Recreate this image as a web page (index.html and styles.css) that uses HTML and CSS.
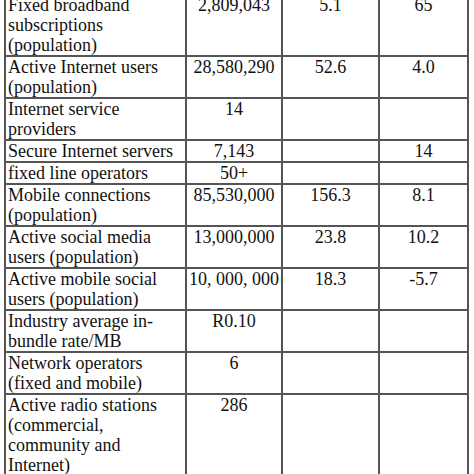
FILE: index.html
```html
<!DOCTYPE html>
<html>
<head>
<meta charset="utf-8">
<link rel="stylesheet" href="styles.css">
</head>
<body>
<table class="stats">
  <colgroup>
    <col class="c-label">
    <col class="c-value">
    <col class="c-pct">
    <col class="c-growth">
  </colgroup>
  <tbody>
    <tr><td class="label">Fixed broadband<br>subscriptions<br>(population)</td><td>2,809,043</td><td>5.1</td><td>65</td></tr>
    <tr><td class="label">Active Internet users<br>(population)</td><td>28,580,290</td><td>52.6</td><td>4.0</td></tr>
    <tr><td class="label">Internet service<br>providers</td><td>14</td><td></td><td></td></tr>
    <tr><td class="label">Secure Internet servers</td><td>7,143</td><td></td><td>14</td></tr>
    <tr><td class="label">fixed line operators</td><td>50+</td><td></td><td></td></tr>
    <tr><td class="label">Mobile connections<br>(population)</td><td>85,530,000</td><td>156.3</td><td>8.1</td></tr>
    <tr><td class="label">Active social media<br>users (population)</td><td>13,000,000</td><td>23.8</td><td>10.2</td></tr>
    <tr><td class="label">Active mobile social<br>users (population)</td><td>10, 000, 000</td><td>18.3</td><td>-5.7</td></tr>
    <tr><td class="label">Industry average in-<br>bundle rate/MB</td><td>R0.10</td><td></td><td></td></tr>
    <tr><td class="label">Network operators<br>(fixed and mobile)</td><td>6</td><td></td><td></td></tr>
    <tr><td class="label">Active radio stations<br>(commercial,<br>community and<br>Internet)</td><td>286</td><td></td><td></td></tr>
  </tbody>
</table>
</body>
</html>
```
FILE: styles.css
```css
html, body {
  margin: 0;
  padding: 0;
  background: #ffffff;
  overflow: hidden;
}
.stats {
  border-collapse: collapse;
  table-layout: fixed;
  width: 465px;
  margin: -7px 0 0 4px;
  font-family: "Liberation Serif", "Times New Roman", serif;
  font-size: 18px;
  line-height: 20px;
  color: #111111;
}
.c-label { width: 181px; }
.c-value { width: 96px; }
.c-pct { width: 97px; }
.c-growth { width: 89px; }
.stats td {
  border: 2px solid #555555;
  padding: 0 2px;
  vertical-align: top;
  text-align: center;
  white-space: nowrap;
}
.stats td.label {
  text-align: left;
}
```
